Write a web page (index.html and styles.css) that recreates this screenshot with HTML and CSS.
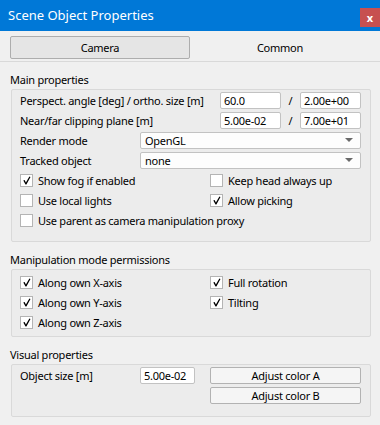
FILE: index.html
```html
<!DOCTYPE html>
<html lang="en">
<head>
  <meta charset="UTF-8" />
  <title>Scene Object Properties</title>
  <link rel="stylesheet" href="styles.css">
</head>
<body>

  <!-- Title bar -->
  <div class="titlebar">
    <span class="title">Scene Object Properties</span>
    <span class="close">x</span>
  </div>

  <!-- Tabs -->
  <div class="tabs">
    <button class="tab active">Camera</button>
    <button class="tab">Common</button>
  </div>

  <!-- Main properties -->
  <div class="group-label">Main properties</div>
  <div class="group-box main">
    <div class="row pair">
      <span class="lbl">Perspect. angle [deg] / ortho. size [m]</span>
      <input class="edit" type="text" value="60.0" />
      <span class="sep">/</span>
      <input class="edit" type="text" value="2.00e+00" />
    </div>
    <div class="row pair">
      <span class="lbl">Near/far clipping plane [m]</span>
      <input class="edit" type="text" value="5.00e-02" />
      <span class="sep">/</span>
      <input class="edit" type="text" value="7.00e+01" />
    </div>
    <div class="row combo-row">
      <span class="lbl">Render mode</span>
      <div class="combo"><span>OpenGL</span><span class="arrow"></span></div>
    </div>
    <div class="row combo-row">
      <span class="lbl">Tracked object</span>
      <div class="combo"><span>none</span><span class="arrow"></span></div>
    </div>
    <div class="checks">
      <label class="check"><span class="box on"></span>Show fog if enabled</label>
      <label class="check"><span class="box"></span>Keep head always up</label>
      <label class="check"><span class="box"></span>Use local lights</label>
      <label class="check"><span class="box on"></span>Allow picking</label>
      <label class="check wide"><span class="box"></span>Use parent as camera manipulation proxy</label>
    </div>
  </div>

  <!-- Manipulation permissions -->
  <div class="group-label">Manipulation mode permissions</div>
  <div class="group-box perms">
    <div class="checks">
      <label class="check"><span class="box on"></span>Along own X-axis</label>
      <label class="check"><span class="box on"></span>Full rotation</label>
      <label class="check"><span class="box on"></span>Along own Y-axis</label>
      <label class="check"><span class="box on"></span>Tilting</label>
      <label class="check"><span class="box on"></span>Along own Z-axis</label>
    </div>
  </div>

  <!-- Visual properties -->
  <div class="group-label">Visual properties</div>
  <div class="group-box visual">
    <span class="lbl">Object size [m]</span>
    <input class="edit" type="text" value="5.00e-02" />
    <button class="btn">Adjust color A</button>
    <button class="btn second">Adjust color B</button>
  </div>

</body>
</html>
```

FILE: styles.css
```css
/* Base */
html, body {
  margin: 0;
  padding: 0;
  background: #f0f0f0;
  color: #000;
  font-family: "Noto Sans", "Open Sans", sans-serif;
  font-size: 11px;
  letter-spacing: -0.25px;
}

/* Title bar */
.titlebar {
  display: flex;
  height: 31px;
  background: #0078d7;
  color: #fff;
}
.title {
  flex: 1;
  padding-left: 8px;
  line-height: 31px;
  font-size: 13px;
  letter-spacing: 0;
}
.close {
  display: flex;
  align-items: center;
  justify-content: center;
  margin-top: 8px;
  width: 20px;
  height: 19px;
  background: #c75050;
  color: #fff;
  font-weight: bold;
  font-size: 11px;
  letter-spacing: 0;
}

/* Tabs */
.tabs {
  display: flex;
  padding: 5px 10px 2px;
  border-bottom: 1px solid #d9d9d9;
}
.tab {
  width: 180px;
  height: 23px;
  padding: 0;
  font: inherit;
  letter-spacing: inherit;
  color: #000;
  background: transparent;
  border: 1px solid transparent;
  border-radius: 2px;
}
.tab.active {
  background: #e5e5e5;
  border-color: #adadad;
}

/* Group boxes */
.group-label {
  height: 27px;
  box-sizing: border-box;
  padding: 11px 0 0 10px;
  line-height: 14px;
}
.group-box {
  margin: 0 9px 0 11px;
  padding: 0 9px 11px 8px;
  border: 1px solid #d9d9d9;
  border-radius: 2px;
  background: #ececec;
}
.group-box.perms {
  padding-top: 2px;
  padding-bottom: 4px;
}

.row {
  display: flex;
  align-items: center;
  height: 20px;
}
.lbl { white-space: nowrap; }
.pair .lbl { width: 200px; }
.combo-row .lbl { width: 120px; }
.sep {
  width: 19px;
  text-align: center;
}

/* Inputs */
.edit {
  width: 61px;
  height: 17px;
  box-sizing: border-box;
  margin: 0;
  padding: 0 3px;
  font: inherit;
  letter-spacing: inherit;
  color: #000;
  background: #fff;
  border: 1px solid #c2c2c2;
  border-radius: 2px;
  outline: none;
}
.combo {
  flex: 1;
  display: flex;
  align-items: center;
  justify-content: space-between;
  height: 17px;
  box-sizing: border-box;
  padding: 0 7px 0 4px;
  background: #fdfdfd;
  border: 1px solid #c2c2c2;
  border-radius: 2px;
}
.arrow {
  width: 0;
  height: 0;
  border-left: 4px solid transparent;
  border-right: 4px solid transparent;
  border-top: 4px solid #6a6a6a;
}

/* Check boxes */
.checks {
  display: grid;
  grid-template-columns: 190px 1fr;
  grid-auto-rows: 20px;
}
.check {
  display: flex;
  align-items: center;
  gap: 5px;
  white-space: nowrap;
}
.check.wide { grid-column: 1 / -1; }
.box {
  width: 13px;
  height: 13px;
  box-sizing: border-box;
  background: #fff;
  border: 1px solid #b4b4b4;
}
.box.on {
  background: #fff url("data:image/svg+xml;utf8,<svg xmlns='http://www.w3.org/2000/svg' viewBox='0 0 11 11'><path d='M2.3 5.6 L3.6 5 L4.9 7.4 L8.4 1.4 L9.5 1.9 L5.4 9.6 L4.5 9.6 Z' fill='black'/></svg>") no-repeat center / 11px 11px;
}

/* Visual properties */
.group-box.visual {
  display: grid;
  grid-template-columns: 120px 70px 1fr;
  grid-auto-rows: 20px;
  align-items: center;
}
.visual .edit { width: 55px; }
.btn {
  height: 17px;
  padding: 0;
  font: inherit;
  letter-spacing: inherit;
  color: #000;
  background: #f5f5f5;
  border: 1px solid #b2b2b2;
  border-radius: 2px;
}
.btn.second { grid-column: 3; }
```
